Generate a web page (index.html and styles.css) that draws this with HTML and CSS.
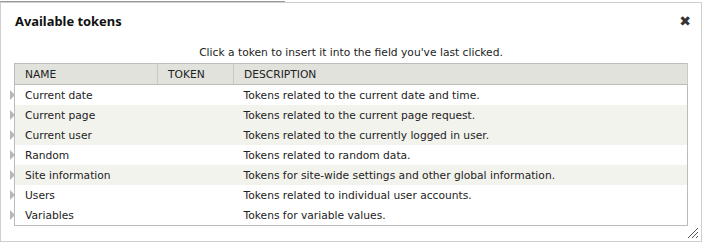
FILE: index.html
```html
<!DOCTYPE html>
<html>
<head>
<meta charset="utf-8">
<link rel="stylesheet" href="styles.css">
</head>
<body>
<div class="backline"></div>
<div class="dialog">
  <div class="titlebar">
    <span class="title">Available tokens</span>
    <span class="close">✖</span>
  </div>
  <div class="content">
    <p class="help">Click a token to insert it into the field you've last clicked.</p>
    <table class="tree">
      <thead>
        <tr><th class="c-name">NAME</th><th class="c-token">TOKEN</th><th class="c-desc">DESCRIPTION</th></tr>
      </thead>
      <tbody>
        <tr><td><span class="exp"></span>Current date</td><td></td><td>Tokens related to the current date and time.</td></tr>
        <tr class="alt"><td><span class="exp"></span>Current page</td><td></td><td>Tokens related to the current page request.</td></tr>
        <tr class="alt"><td><span class="exp"></span>Current user</td><td></td><td>Tokens related to the currently logged in user.</td></tr>
        <tr><td><span class="exp"></span>Random</td><td></td><td>Tokens related to random data.</td></tr>
        <tr class="alt"><td><span class="exp"></span>Site information</td><td></td><td>Tokens for site-wide settings and other global information.</td></tr>
        <tr><td><span class="exp"></span>Users</td><td></td><td>Tokens related to individual user accounts.</td></tr>
        <tr><td><span class="exp"></span>Variables</td><td></td><td>Tokens for variable values.</td></tr>
      </tbody>
    </table>
  </div>
  <div class="grip">
    <svg width="12" height="12" viewBox="0 0 12 12"><path d="M11 1 L1 11 M11 5 L5 11 M11 9 L9 11" stroke="#555" stroke-width="1" fill="none"/></svg>
  </div>
</div>
</body>
</html>
```
FILE: styles.css
```css
html, body { margin: 0; padding: 0; background: #fff; }
body { font-family: "DejaVu Sans", Verdana, sans-serif; color: #222; width: 705px; height: 248px; overflow: hidden; }
.backline { width: 285px; height: 1px; margin-top: 1px; background: #9a9a9a; }
.dialog { width: 702px; height: 240px; border: 1px solid #cfcfcf; box-sizing: border-box; display: flex; flex-direction: column; position: relative; }
.titlebar { height: 36px; display: flex; align-items: center; justify-content: space-between; padding: 0 10px 0 14px; }
.title { font-family: "Noto Sans", "Open Sans", sans-serif; font-weight: bold; font-size: 12.9px; color: #111; }
.close { font-size: 14px; color: #333; line-height: 1; }
.content { padding: 7px 13px 0 13px; }
.help { margin: 0 0 3px; text-align: center; font-size: 10.7px; line-height: 14px; }
.tree { width: 100%; border-collapse: collapse; font-size: 10.7px; border: 1px solid #bdbdb8; }
.tree th { background: #e1e2dc; text-align: left; font-weight: normal; height: 20px; padding: 0 10px; border-right: 1px solid #c9cac4; border-bottom: 1px solid #bdbdb8; }
.tree .c-name { width: 122px; }
.tree .c-token { width: 55px; }
.tree td { height: 20px; padding: 0 10px; }
.tree tr.alt td { background: #f3f3ee; }
.exp { display: inline-block; width: 0; height: 0; border-left: 5px solid #b8b8b8; border-top: 5px solid transparent; border-bottom: 5px solid transparent; margin-left: -15px; margin-right: 10px; vertical-align: -1px; }
.grip { position: absolute; right: 2px; bottom: 2px; line-height: 0; }
```
